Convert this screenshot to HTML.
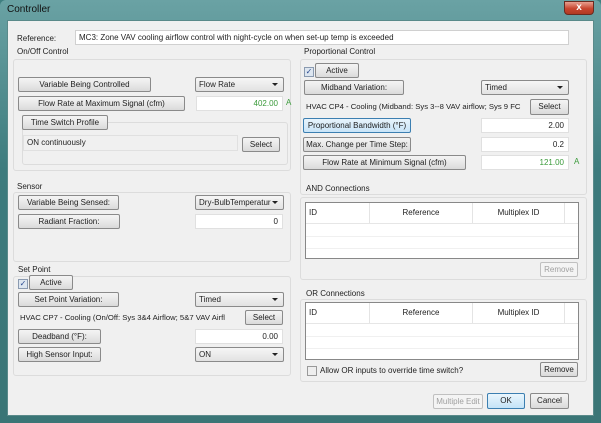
<!DOCTYPE html>
<html><head><style>
*{box-sizing:border-box;margin:0;padding:0}
body{width:601px;height:423px;overflow:hidden;background:#3f7f80;font-family:"Liberation Sans",sans-serif;font-size:8px;color:#222;position:relative}
.frame{position:absolute;left:0;top:0;width:601px;height:423px;background:linear-gradient(#6aa2a4,#3d7b7d 40%,#3a7576);border-radius:6px 6px 0 0}
.title{position:absolute;left:7px;top:4px;font-size:10px;color:#111}
.close{position:absolute;left:564px;top:1px;width:30px;height:14px;background:linear-gradient(#e8a090,#c8452f 55%,#b03a22);border:1px solid #6a2a20;border-radius:0 0 4px 4px;color:#fff;font-size:10px;font-weight:bold;text-align:center;line-height:12px}
.client{position:absolute;left:7px;top:20px;width:587px;height:396px;background:#f0f0f0;border:1px solid #5a8a8a}
.a{position:absolute;white-space:nowrap}
.btn{position:absolute;background:linear-gradient(#f4f4f4,#e8e8e8 50%,#dadada);border:1px solid #8a8a8a;border-radius:2px;text-align:center;line-height:13px;white-space:nowrap}
.inp{position:absolute;background:#fff;border:1px solid #e0e0e0;text-align:right;padding-right:4px;line-height:13px}
.cmb{position:absolute;background:linear-gradient(#f6f6f6,#e2e2e2);border:1px solid #8a8a8a;border-radius:2px;padding-left:3px;line-height:13px;overflow:hidden;white-space:nowrap}
.cmb:after{content:"";position:absolute;right:5px;top:5px;border-left:3px solid transparent;border-right:3px solid transparent;border-top:3px solid #222}
.grp{position:absolute;border:1px solid #dcdcdc;border-radius:3px}
.chk{position:absolute;width:10px;height:10px;border:1px solid #8a9ab0;background:#dde6f0;font-size:8px;line-height:8px;text-align:center;color:#2a4a90}
.g{color:#3a9a3a}
.tbl{position:absolute;background:#fff;border:1px solid #888}
.th{position:absolute;top:0;height:20px;line-height:20px;border-right:1px solid #e4e4e4}
.rl{position:absolute;left:0;right:0;height:1px;background:#f0f0f0}
.dis{color:#a0a0a0;border-color:#c0c0c0;background:#f4f4f4}
</style></head><body>
<div class="frame"></div>
<div class="title">Controller</div>
<div class="close">x</div>
<div class="client"></div>

<div class="a" style="left:17px;top:34px">Reference:</div>
<div class="inp" style="left:75px;top:30px;width:494px;height:15px;text-align:left;padding-left:3px;border-color:#d0d0d0">MC3: Zone VAV cooling airflow control with night-cycle on when set-up temp is exceeded</div>

<div class="a" style="left:17px;top:47px">On/Off Control</div>
<div class="grp" style="left:13px;top:59px;width:278px;height:112px"></div>
<div class="btn" style="left:18px;top:77px;width:133px;height:15px">Variable Being Controlled</div>
<div class="cmb" style="left:195px;top:77px;width:89px;height:15px">Flow Rate</div>
<div class="btn" style="left:18px;top:96px;width:167px;height:15px">Flow Rate at Maximum Signal (cfm)</div>
<div class="inp g" style="left:196px;top:96px;width:87px;height:15px">402.00</div>
<div class="a g" style="left:286px;top:98px">A</div>
<div class="grp" style="left:22px;top:122px;width:266px;height:43px"></div>
<div class="btn" style="left:22px;top:115px;width:86px;height:15px">Time Switch Profile</div>
<div class="a" style="left:23px;top:135px;width:215px;height:16px;border:1px solid #e0e0e0;padding:2px 3px">ON continuously</div>
<div class="btn" style="left:242px;top:137px;width:38px;height:15px">Select</div>

<div class="a" style="left:17px;top:182px">Sensor</div>
<div class="grp" style="left:13px;top:192px;width:278px;height:70px"></div>
<div class="btn" style="left:18px;top:195px;width:101px;height:15px">Variable Being Sensed:</div>
<div class="cmb" style="left:195px;top:195px;width:89px;height:15px">Dry-BulbTemperatur&nbsp;&nbsp;&nbsp;</div>
<div class="btn" style="left:18px;top:214px;width:102px;height:15px">Radiant Fraction:</div>
<div class="inp" style="left:195px;top:214px;width:88px;height:15px">0</div>

<div class="a" style="left:18px;top:265px">Set Point</div>
<div class="grp" style="left:13px;top:276px;width:278px;height:100px"></div>
<div class="chk" style="left:18px;top:279px">✓</div>
<div class="btn" style="left:29px;top:275px;width:44px;height:15px">Active</div>
<div class="btn" style="left:18px;top:292px;width:101px;height:15px">Set Point Variation:</div>
<div class="cmb" style="left:195px;top:292px;width:89px;height:15px">Timed</div>
<div class="a" style="left:20px;top:313px;font-size:7.7px">HVAC CP7 - Cooling (On/Off: Sys 3&amp;4 Airflow; 5&amp;7 VAV Airfl</div>
<div class="btn" style="left:245px;top:310px;width:38px;height:15px">Select</div>
<div class="btn" style="left:18px;top:329px;width:83px;height:15px">Deadband (°F):</div>
<div class="inp" style="left:195px;top:329px;width:88px;height:15px">0.00</div>
<div class="btn" style="left:18px;top:347px;width:83px;height:15px">High Sensor Input:</div>
<div class="cmb" style="left:195px;top:347px;width:89px;height:15px">ON</div>

<div class="a" style="left:304px;top:47px">Proportional Control</div>
<div class="grp" style="left:300px;top:59px;width:287px;height:136px"></div>
<div class="chk" style="left:304px;top:67px">✓</div>
<div class="btn" style="left:315px;top:63px;width:44px;height:15px">Active</div>
<div class="btn" style="left:304px;top:80px;width:100px;height:15px">Midband Variation:</div>
<div class="cmb" style="left:481px;top:80px;width:88px;height:15px">Timed</div>
<div class="a" style="left:306px;top:102px;font-size:7.7px">HVAC CP4 - Cooling (Midband: Sys 3--8 VAV airflow; Sys 9 FC</div>
<div class="btn" style="left:530px;top:99px;width:39px;height:16px">Select</div>
<div class="btn" style="left:303px;top:118px;width:108px;height:15px;background:linear-gradient(#e8f4fc,#c8e4f8);border-color:#3c7fb1">Proportional Bandwidth (°F)</div>
<div class="inp" style="left:481px;top:118px;width:88px;height:15px">2.00</div>
<div class="btn" style="left:303px;top:137px;width:108px;height:15px">Max. Change per Time Step:</div>
<div class="inp" style="left:481px;top:137px;width:88px;height:15px">0.2</div>
<div class="btn" style="left:303px;top:155px;width:163px;height:15px">Flow Rate at Minimum Signal (cfm)</div>
<div class="inp g" style="left:481px;top:155px;width:88px;height:15px">121.00</div>
<div class="a g" style="left:574px;top:157px">A</div>

<div class="a" style="left:306px;top:184px">AND Connections</div>
<div class="grp" style="left:300px;top:197px;width:287px;height:83px"></div>
<div class="tbl" style="left:305px;top:202px;width:274px;height:57px">
<div class="th" style="left:0;width:64px;padding-left:3px">ID</div>
<div class="th" style="left:64px;width:103px;text-align:center">Reference</div>
<div class="th" style="left:167px;width:92px;text-align:center">Multiplex ID</div>
<div class="rl" style="top:20px;background:#e6e6e6"></div><div class="rl" style="top:33px"></div><div class="rl" style="top:45px"></div>
</div>
<div class="btn dis" style="left:540px;top:262px;width:38px;height:15px">Remove</div>

<div class="a" style="left:306px;top:289px">OR Connections</div>
<div class="grp" style="left:300px;top:299px;width:287px;height:83px"></div>
<div class="tbl" style="left:305px;top:302px;width:274px;height:58px">
<div class="th" style="left:0;width:64px;padding-left:3px">ID</div>
<div class="th" style="left:64px;width:103px;text-align:center">Reference</div>
<div class="th" style="left:167px;width:92px;text-align:center">Multiplex ID</div>
<div class="rl" style="top:20px;background:#e6e6e6"></div><div class="rl" style="top:33px"></div><div class="rl" style="top:45px"></div>
</div>
<div class="chk" style="left:307px;top:366px;background:#eee;border-color:#999"></div>
<div class="a" style="left:320px;top:366px">Allow OR inputs to override time switch?</div>
<div class="btn" style="left:540px;top:362px;width:38px;height:15px">Remove</div>

<div class="btn dis" style="left:433px;top:394px;width:50px;height:15px">Multiple Edit</div>
<div class="btn" style="left:487px;top:393px;width:38px;height:16px;border-color:#3c7fb1;background:linear-gradient(#eaf6fd,#c4e3f7)">OK</div>
<div class="btn" style="left:530px;top:393px;width:39px;height:16px">Cancel</div>
</body></html>
